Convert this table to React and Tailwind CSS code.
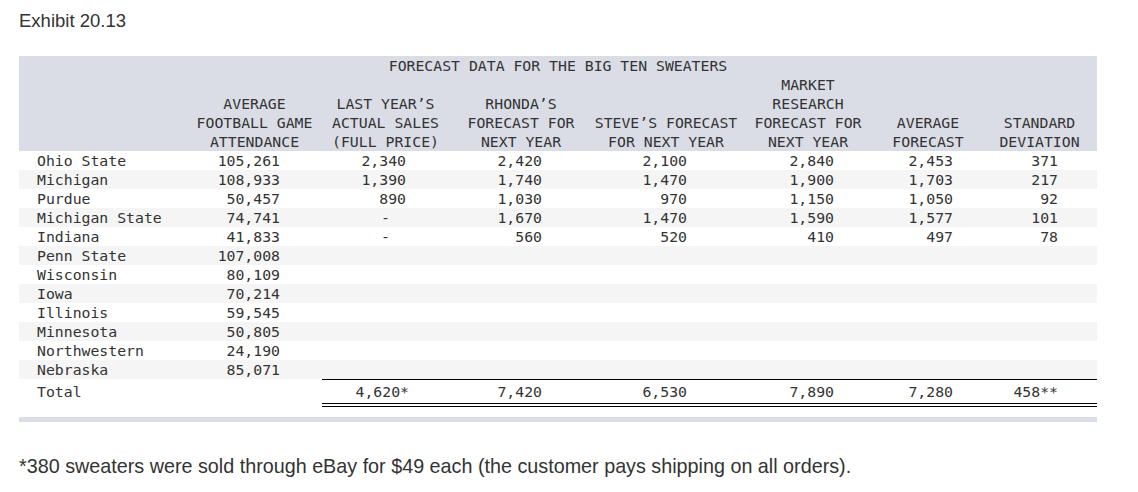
import React from "react";

const mono = { fontFamily: '"DejaVu Sans Mono", "Liberation Mono", monospace' };

const COLS = "grid grid-cols-[171px_129px_133px_138px_152px_132px_108px_115px]";
const PR = ["pl-[18px]", "pr-[39px]", "pr-[46px]", "pr-[48px]", "pr-[55px]", "pr-[40px]", "pr-[29px]", "pr-[39px]"];

const headers = [
  [],
  ["AVERAGE", "FOOTBALL GAME", "ATTENDANCE"],
  ["LAST YEAR\u2019S", "ACTUAL SALES", "(FULL PRICE)"],
  ["RHONDA\u2019S", "FORECAST FOR", "NEXT YEAR"],
  ["STEVE\u2019S FORECAST", "FOR NEXT YEAR"],
  ["MARKET", "RESEARCH", "FORECAST FOR", "NEXT YEAR"],
  ["AVERAGE", "FORECAST"],
  ["STANDARD", "DEVIATION"],
];

const rows = [
  ["Ohio State", "105,261", "2,340", "2,420", "2,100", "2,840", "2,453", "371"],
  ["Michigan", "108,933", "1,390", "1,740", "1,470", "1,900", "1,703", "217"],
  ["Purdue", "50,457", "890", "1,030", "970", "1,150", "1,050", "92"],
  ["Michigan State", "74,741", "-", "1,670", "1,470", "1,590", "1,577", "101"],
  ["Indiana", "41,833", "-", "560", "520", "410", "497", "78"],
  ["Penn State", "107,008"],
  ["Wisconsin", "80,109"],
  ["Iowa", "70,214"],
  ["Illinois", "59,545"],
  ["Minnesota", "50,805"],
  ["Northwestern", "24,190"],
  ["Nebraska", "85,071"],
];

const totals = ["4,620*", "7,420", "6,530", "7,890", "7,280", "458**"];
const TPR = ["pr-[43px]", "pr-[48px]", "pr-[55px]", "pr-[40px]", "pr-[29px]", "pr-[39px]"];
const TCOLS = "grid grid-cols-[130px_138px_152px_132px_108px_115px]";

export default function App() {
  return (
    <div className="w-[1138px] h-[492px] bg-white text-[#333] overflow-hidden">
      <div className="pl-[19px] pt-[9px]">
        <div
          className="h-[24px] leading-[24px] text-[18.5px]"
          style={{ fontFamily: '"Liberation Sans", Arial, sans-serif' }}
        >
          Exhibit 20.13
        </div>

        <div className="mt-[23px] w-[1078px] text-[14.8px] leading-[19px]" style={mono}>
          {/* header */}
          <div className="bg-[#dadde6] h-[95px]">
            <div className="h-[19px] text-center whitespace-pre">
              FORECAST DATA FOR THE BIG TEN SWEATERS
            </div>
            <div className={`${COLS} h-[76px]`}>
              {headers.map((lines, i) => (
                <div key={i} className="flex flex-col justify-end items-center whitespace-pre">
                  {lines.map((l, j) => (
                    <div key={j} className="h-[19px]">{l}</div>
                  ))}
                </div>
              ))}
            </div>
          </div>

          {/* data rows */}
          {rows.map((r, i) => (
            <div key={i} className={`${COLS} h-[19px] ${i % 2 === 1 ? "bg-[#f5f5f5]" : "bg-white"}`}>
              {PR.map((pr, c) => {
                const v = r[c] || "";
                if (c === 0) return <div key={c} className={`${pr} whitespace-pre`}>{v}</div>;
                if (v === "-") return <div key={c} className="text-center">{v}</div>;
                return <div key={c} className={`${pr} text-right whitespace-pre`}>{v}</div>;
              })}
            </div>
          ))}

          {/* total row */}
          <div className="flex">
            <div className="w-[303px] pt-[1px] h-[28px] leading-[23px] pl-[18px]">Total</div>
            <div className="w-[775px]">
              <div className="border-t border-black">
                <div className={`${TCOLS} h-[23px] leading-[23px]`}>
                  {totals.map((t, i) => (
                    <div key={i} className={`${TPR[i]} text-right whitespace-pre`}>{t}</div>
                  ))}
                </div>
              </div>
              <div className="h-[4px] border-y border-black"></div>
            </div>
          </div>

          <div className="mt-[10px] h-[5px] bg-[#dadde6]"></div>
        </div>

        <div
          className="mt-[32px] h-[24px] leading-[24px] text-[19.75px]"
          style={{ fontFamily: '"Liberation Sans", Arial, sans-serif' }}
        >
          *380 sweaters were sold through eBay for $49 each (the customer pays shipping on all orders).
        </div>
      </div>
    </div>
  );
}
